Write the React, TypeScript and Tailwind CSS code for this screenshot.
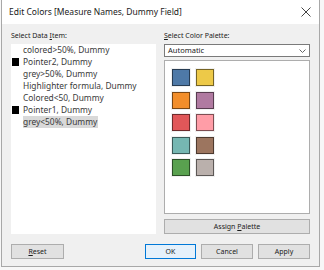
const items: { label: string; marker?: boolean; selected?: boolean }[] = [
  { label: 'colored>50%, Dummy' },
  { label: 'Pointer2, Dummy', marker: true },
  { label: 'grey>50%, Dummy' },
  { label: 'Highlighter formula, Dummy' },
  { label: 'Colored<50, Dummy' },
  { label: 'Pointer1, Dummy', marker: true },
  { label: 'grey<50%, Dummy', selected: true },
];

// Tableau 10, laid out row by row (left column, right column)
const swatches = [
  '#4e79a7', '#edc948',
  '#f28e2b', '#b07aa1',
  '#e15759', '#ff9da7',
  '#76b7b2', '#9c755f',
  '#59a14f', '#bab0ac',
];

const font = { fontFamily: '"Noto Sans", "Open Sans", sans-serif' };

function Button({ children, primary = false, className = '' }: { children: React.ReactNode; primary?: boolean; className?: string }) {
  return (
    <button
      className={
        'flex h-[15px] items-center justify-center border text-[7px] leading-none text-[#1a1a1a] ' +
        (primary ? 'border-[#0078d7] bg-[#e5f1fb] ' : 'border-[#adadad] bg-[#e1e1e1] ') +
        className
      }
    >
      <span className="whitespace-pre">{children}</span>
    </button>
  );
}

export default function App() {
  return (
    <div className="h-[270px] w-[324px] bg-[#f7f7f7] pl-[1px]" style={font}>
      <div className="flex h-[267px] w-[319px] flex-col border-x border-b border-[#a8a8a8]">
        {/* title bar */}
        <div className="flex h-[24px] items-center justify-between bg-white pl-[7px] pr-[8px]">
          <span className="whitespace-nowrap text-[8.5px] text-[#1a1a1a]">Edit Colors [Measure Names, Dummy Field]</span>
          <svg width="10" height="10" viewBox="0 0 10 10" className="text-[#444]">
            <path d="M0.5 0.5 L9.5 9.5 M9.5 0.5 L0.5 9.5" stroke="currentColor" strokeWidth="1" />
          </svg>
        </div>

        <div className="flex flex-1 flex-col bg-[#f0f0f0] px-[9px] pb-[7px] pt-[5px]">
          <div className="flex gap-[8px]">
            {/* data items */}
            <div className="flex w-[146px] flex-col">
              <div className="h-[15px] whitespace-nowrap pt-[1px] text-[7px] leading-[12px] text-[#1a1a1a]">
                Select Data <span className="underline">I</span>tem:
              </div>
              <div className="h-[190px] bg-white pl-[1px]">
                {items.map((it) => (
                  <div key={it.label} className="flex h-[12px] items-center">
                    <div className="flex w-[11px] items-center">
                      {it.marker && <div className="h-[8px] w-[7px] bg-black" />}
                    </div>
                    <span
                      className={
                        'whitespace-nowrap text-[8.4px] leading-[12px] text-[#3a3a3a] ' +
                        (it.selected ? 'bg-[#d9d9d9] pr-[1px]' : '')
                      }
                    >
                      {it.label}
                    </span>
                  </div>
                ))}
              </div>
            </div>

            {/* palette */}
            <div className="flex w-[147px] flex-col">
              <div className="h-[15px] whitespace-nowrap pt-[1px] text-[7px] leading-[12px] text-[#1a1a1a]">
                <span className="underline">S</span>elect Color Palette:
              </div>
              <div className="flex h-[13px] items-center justify-between border border-[#7a7a7a] bg-white pl-[3px] pr-[3px]">
                <span className="text-[7.5px] leading-none text-[#1a1a1a]">Automatic</span>
                <svg width="7" height="4" viewBox="0 0 7 4">
                  <path d="M0.5 0.5 L3.5 3.5 L6.5 0.5" fill="none" stroke="#666" strokeWidth="1" />
                </svg>
              </div>
              <div className="mt-[3px] h-[154px] border border-[#adadad] bg-white pl-[7px] pt-[8px]">
                <div className="grid w-fit grid-cols-[18px_18px] gap-x-[6px] gap-y-[5.5px]">
                  {swatches.map((c) => (
                    <div
                      key={c}
                      className="h-[17px] w-[18px] border border-black/50 shadow-[0_0_0_1px_rgba(0,0,0,0.06)]"
                      style={{ backgroundColor: c }}
                    />
                  ))}
                </div>
              </div>
              <Button className="mt-[5px] w-full">
                Assign <span className="underline">P</span>alette
              </Button>
            </div>
          </div>

          {/* footer */}
          <div className="mt-[10px] flex items-center justify-between">
            <Button className="w-[53px]">
              <span className="underline">R</span>eset
            </Button>
            <div className="flex gap-[5px]">
              <Button primary className="w-[51px]">
                OK
              </Button>
              <Button className="w-[52px]">Cancel</Button>
              <Button className="w-[52px]">Apply</Button>
            </div>
          </div>
        </div>
      </div>
    </div>
  );
}
